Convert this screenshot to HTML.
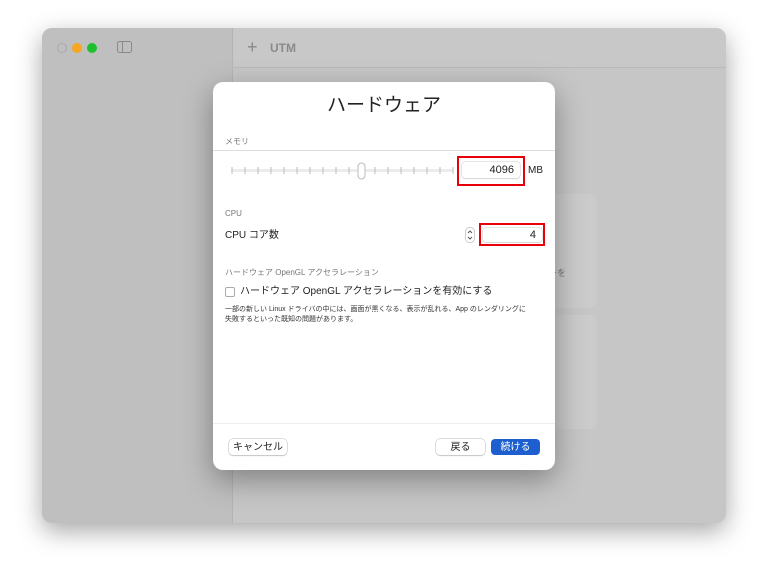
<!DOCTYPE html>
<html><head><meta charset="utf-8"><style>
*{box-sizing:border-box;margin:0;padding:0}
body{width:768px;height:580px;background:#fff;font-family:"Liberation Sans","Noto Sans CJK JP",sans-serif;position:relative;overflow:hidden}
.win{position:absolute;left:42px;top:28px;width:684px;height:495px;background:#c6c6c6;border-radius:10px;box-shadow:0 8px 25px rgba(0,0,0,.35);overflow:hidden}
.side{position:absolute;left:0;top:0;width:191px;height:100%;background:#bfbfbf;border-right:1px solid #b4b4b4}
.tb{position:absolute;left:192px;top:0;right:0;height:40px;border-bottom:1px solid #b8b8b8;background:#c8c8c8}
.dot{position:absolute;top:15px;width:10px;height:10px;border-radius:50%}
.card{position:absolute;background:#cbcbcb;border-radius:8px}
.dlg{position:absolute;left:213px;top:82px;width:342px;height:388px;background:#fff;border-radius:10px;box-shadow:0 10px 30px rgba(0,0,0,.35)}
.t{position:absolute;white-space:nowrap;line-height:1.2}
.red{position:absolute;border:2px solid #e8000b}
.fld{position:absolute;background:#fff;border-radius:3px;box-shadow:0 0 0 .5px #ccc,0 1px 1px #ddd;font-size:11px;color:#222;text-align:right}
.btn{position:absolute;height:16px;border-radius:4px;background:#fff;box-shadow:0 0 0 .5px #bbb,0 1px 1px #ccc;font-size:10px;text-align:center;line-height:12px;padding-top:3px;color:#222}
</style></head><body>
<div class="win">
 <div class="side"></div>
 <div class="dot" style="left:15px;border:1px solid #aaa"></div>
 <div class="dot" style="left:30px;background:#f5a623"></div>
 <div class="dot" style="left:45px;background:#1fc02d"></div>
 <svg style="position:absolute;left:75px;top:13px" width="16" height="13"><rect x=".5" y=".5" width="14" height="11" rx="2" fill="none" stroke="#8a8a8a"/><line x1="5.5" y1="1" x2="5.5" y2="11" stroke="#8a8a8a"/></svg>
 <div class="tb"></div>
 <div class="t" style="left:205px;top:9px;font-size:18px;color:#888">+</div>
 <div class="t" style="left:228px;top:13px;font-size:12px;color:#8a8a8a;font-weight:bold">UTM</div>
 <div class="card" style="left:478px;top:166px;width:77px;height:114px"></div>
 <div class="card" style="left:478px;top:287px;width:77px;height:114px"></div>
 <div class="t" style="left:497px;top:240px;font-size:9px;color:#777">リーを</div>
</div>
<div class="dlg">
 <div class="t" style="left:0;width:342px;text-align:center;top:13px;font-size:19px;color:#222">ハードウェア</div>
 <div class="t" style="left:12px;top:55px;font-size:8px;color:#777">メモリ</div>
 <div style="position:absolute;left:0;right:0;top:68px;border-top:1px solid #ddd"></div>
 <svg style="position:absolute;left:15px;top:80px" width="230" height="18">
  <rect x="3" y="7" width="222" height="3" rx="1.5" fill="#ececec"/>
  <g stroke="#bbb" stroke-width="1">
  <line x1="4" y1="5" x2="4" y2="12"/><line x1="17" y1="5" x2="17" y2="12"/><line x1="30" y1="5" x2="30" y2="12"/><line x1="43" y1="5" x2="43" y2="12"/><line x1="56" y1="5" x2="56" y2="12"/><line x1="69" y1="5" x2="69" y2="12"/><line x1="82" y1="5" x2="82" y2="12"/><line x1="95" y1="5" x2="95" y2="12"/><line x1="108" y1="5" x2="108" y2="12"/><line x1="121" y1="5" x2="121" y2="12"/><line x1="147" y1="5" x2="147" y2="12"/><line x1="160" y1="5" x2="160" y2="12"/><line x1="173" y1="5" x2="173" y2="12"/><line x1="186" y1="5" x2="186" y2="12"/><line x1="199" y1="5" x2="199" y2="12"/><line x1="212" y1="5" x2="212" y2="12"/><line x1="225" y1="5" x2="225" y2="12"/></g>
  <rect x="130" y="1" width="7" height="16" rx="3.5" fill="#fff" stroke="#bbb"/>
 </svg>
 <div class="fld" style="left:249px;top:80px;width:58px;height:16px;line-height:16px;padding-right:6px">4096</div>
 <div class="red" style="left:244px;top:74px;width:68px;height:30px"></div>
 <div class="t" style="left:315px;top:83px;font-size:10px;color:#222">MB</div>
 <div class="t" style="left:12px;top:127px;font-size:8px;color:#777">CPU</div>
 <div class="t" style="left:12px;top:148px;font-size:10px;color:#222">CPU コア数</div>
 <svg style="position:absolute;left:252px;top:145px" width="10" height="16"><rect x=".5" y=".5" width="9" height="15" rx="4" fill="#fff" stroke="#ccc"/><path d="M3 6 L5 4 L7 6 M3 10 L5 12 L7 10" fill="none" stroke="#555"/></svg>
 <div class="fld" style="left:270px;top:146px;width:59px;height:14px;line-height:14px;padding-right:6px">4</div>
 <div class="red" style="left:266px;top:141px;width:66px;height:23px"></div>
 <div class="t" style="left:12px;top:186px;font-size:8px;color:#777">ハードウェア OpenGL アクセラレーション</div>
 <div style="position:absolute;left:12px;top:205px;width:10px;height:10px;border:1px solid #aaa;border-radius:2px"></div>
 <div class="t" style="left:27px;top:204px;font-size:10px;color:#222">ハードウェア OpenGL アクセラレーションを有効にする</div>
 <div class="t" style="left:12px;top:223px;font-size:7px;line-height:10px;color:#333">一部の新しい Linux ドライバの中には、画面が黒くなる、表示が乱れる、App のレンダリングに<br>失敗するといった既知の問題があります。</div>
 <div style="position:absolute;left:0;right:0;top:341px;border-top:1px solid #eee"></div>
 <div class="btn" style="left:16px;top:357px;width:58px">キャンセル</div>
 <div class="btn" style="left:223px;top:357px;width:49px">戻る</div>
 <div class="btn" style="left:278px;top:357px;width:49px;background:#1e5fd0;color:#fff;box-shadow:none">続ける</div>
</div>
</body></html>
